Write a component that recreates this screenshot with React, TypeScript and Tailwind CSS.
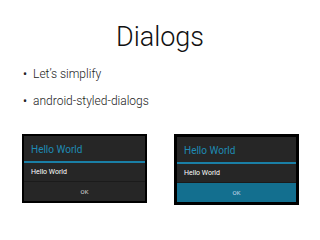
import React from "react";

type DialogProps = {
  pressed?: boolean;
};

function AndroidDialog({ pressed }: DialogProps) {
  return (
    <div
      className={
        pressed
          ? "flex w-[125px] flex-col border-[3px] border-black bg-[#262626] font-['Roboto',sans-serif]"
          : "flex w-[125px] flex-col border-2 border-black bg-[#262626] font-['Roboto',sans-serif]"
      }
    >
      <div className="flex h-[25px] items-end px-[7px] pb-[4px] text-[10px] text-[#1e8ab4]">
        Hello World
      </div>
      <div className="h-[2px] bg-[#1a7fa6]" />
      <div className="flex h-[18px] items-center px-[7px] text-[7px] text-white">
        Hello World
      </div>
      <div
        className={
          pressed
            ? "flex h-[20px] items-center justify-center border-t border-[#1b1b1b] bg-[#136f8f] text-[6px] text-[#cde]"
            : "flex h-[20px] items-center justify-center border-t border-[#1b1b1b] text-[6px] text-[#ddd]"
        }
      >
        OK
      </div>
    </div>
  );
}

export default function App() {
  return (
    <div className="flex h-[240px] w-[320px] flex-col bg-white">
      <h1 className="mt-[21px] text-center font-['Roboto',sans-serif] text-[27px] font-light leading-[32px] text-[#111]">
        Dialogs
      </h1>
      <ul className="mt-[12px] flex flex-col gap-[9px] pl-[23px] font-['Roboto',sans-serif] text-[12px] font-light text-[#222]">
        <li className="flex items-center gap-[6px]">
          <span className="text-[12px] font-normal">•</span>
          <span>Let’s simplify</span>
        </li>
        <li className="flex items-center gap-[6px]">
          <span className="text-[12px] font-normal">•</span>
          <span>android-styled-dialogs</span>
        </li>
      </ul>
      <div className="mt-[24px] flex items-start justify-between pl-[22px] pr-[21px]">
        <AndroidDialog />
        <AndroidDialog pressed />
      </div>
    </div>
  );
}
